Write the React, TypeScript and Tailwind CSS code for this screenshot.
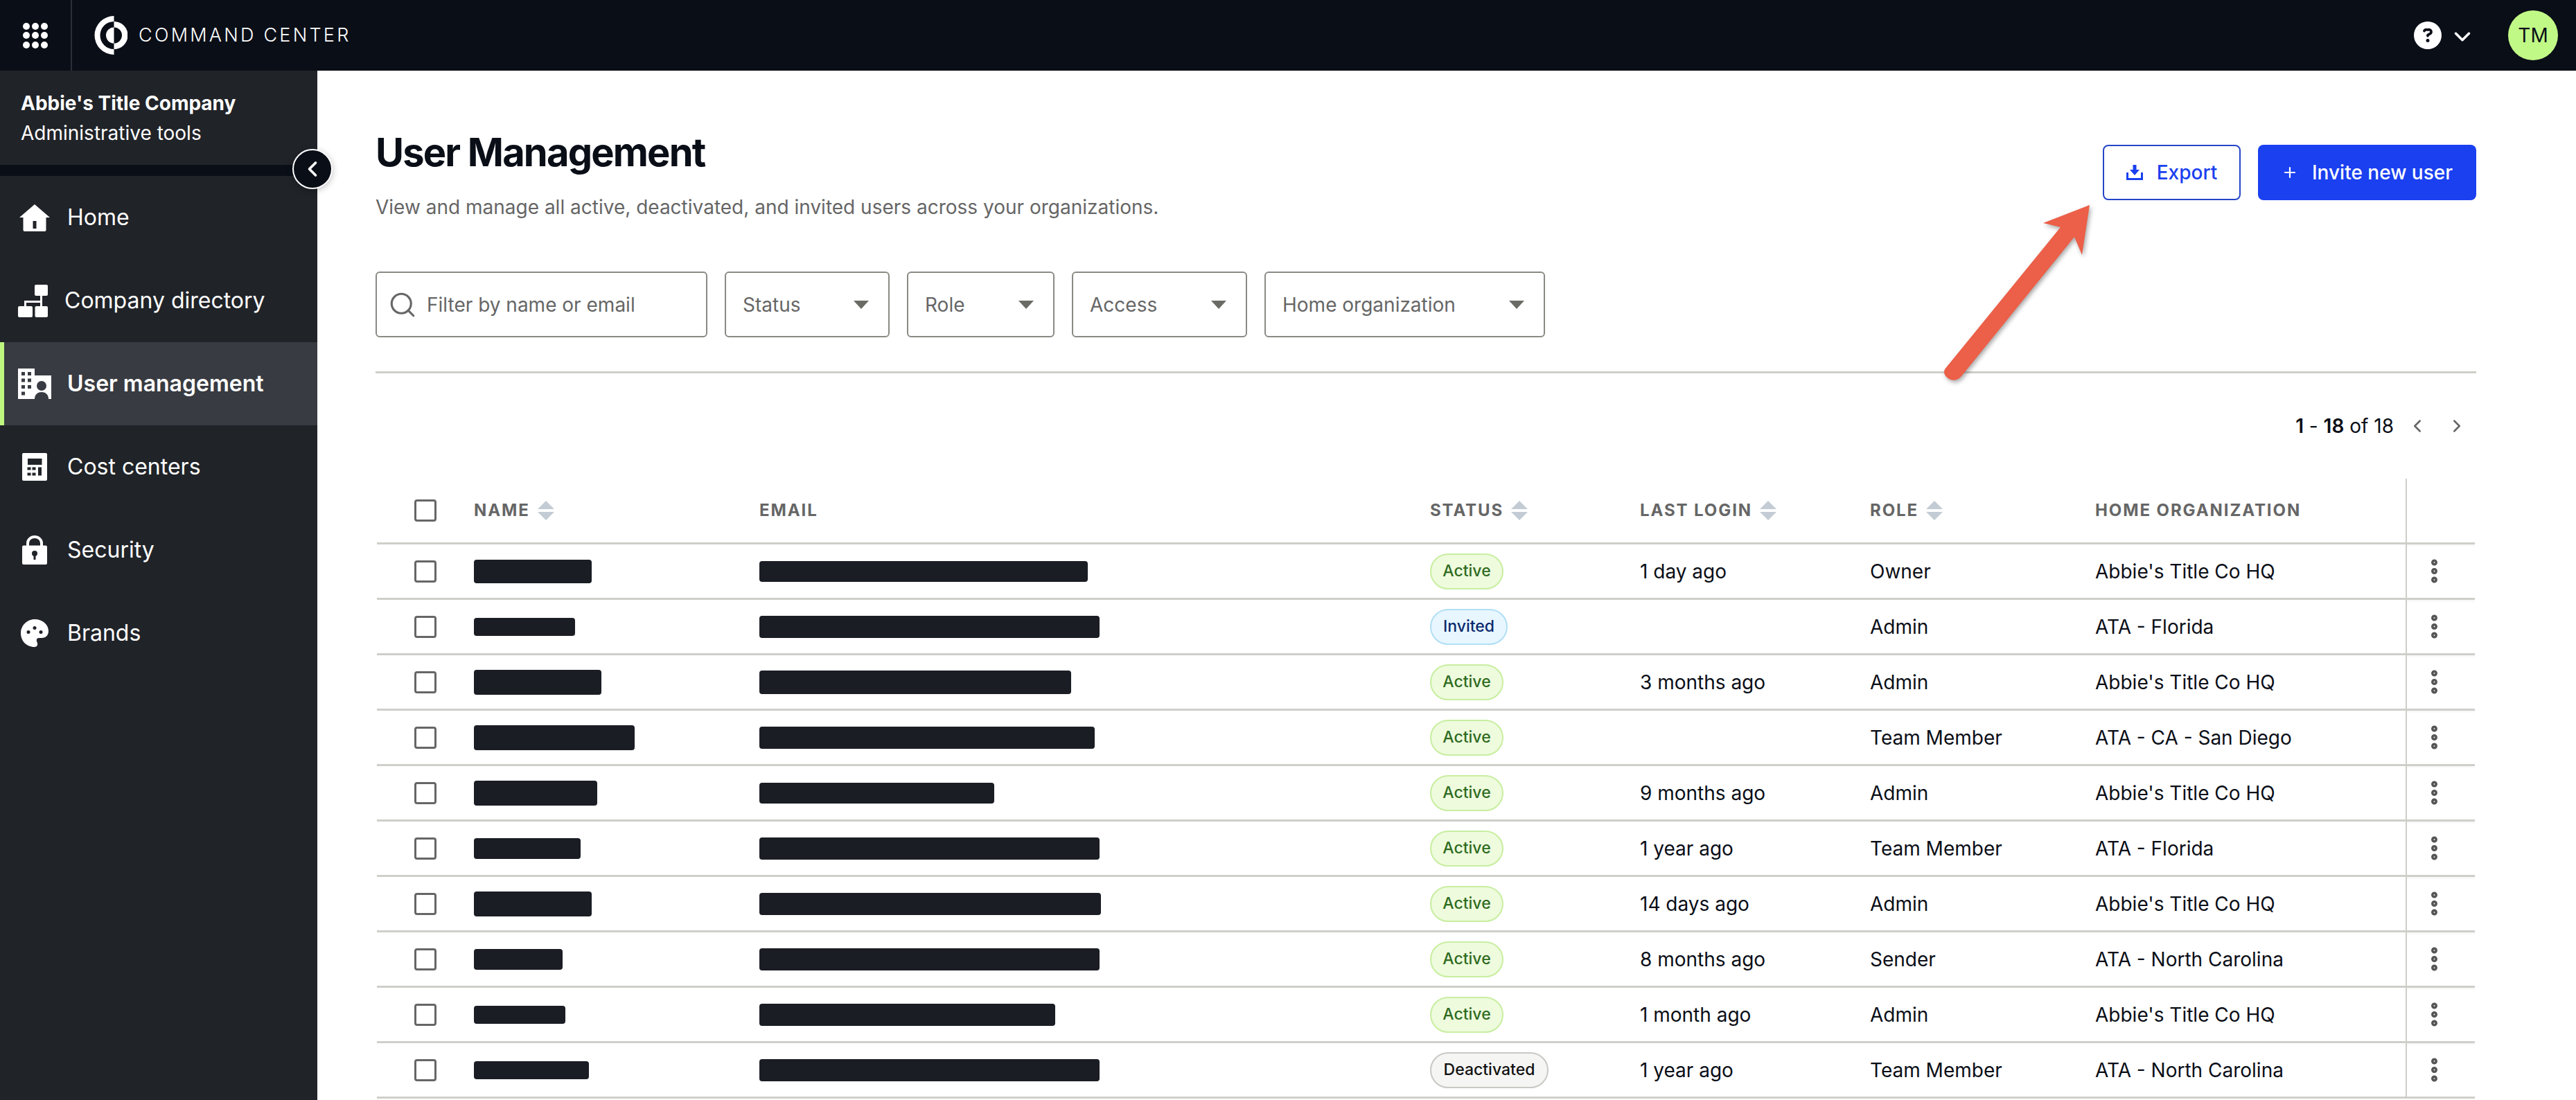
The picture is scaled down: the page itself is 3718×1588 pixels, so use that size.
import { ChevronDown, ChevronLeft, ChevronRight, EllipsisVertical, Plus, Search } from "lucide-react";
import { FaCircleQuestion } from "react-icons/fa6";

const users = [
  { name: 170, nameH: 34, email: 474, emailH: 30, status: "Active", login: "1 day ago", role: "Owner", org: "Abbie's Title Co HQ" },
  { name: 146, nameH: 26, email: 491, emailH: 32, status: "Invited", login: "", role: "Admin", org: "ATA - Florida" },
  { name: 184, nameH: 36, email: 450, emailH: 34, status: "Active", login: "3 months ago", role: "Admin", org: "Abbie's Title Co HQ" },
  { name: 232, nameH: 36, email: 484, emailH: 32, status: "Active", login: "", role: "Team Member", org: "ATA - CA - San Diego" },
  { name: 178, nameH: 36, email: 339, emailH: 30, status: "Active", login: "9 months ago", role: "Admin", org: "Abbie's Title Co HQ" },
  { name: 154, nameH: 30, email: 491, emailH: 32, status: "Active", login: "1 year ago", role: "Team Member", org: "ATA - Florida" },
  { name: 170, nameH: 36, email: 493, emailH: 32, status: "Active", login: "14 days ago", role: "Admin", org: "Abbie's Title Co HQ" },
  { name: 128, nameH: 30, email: 491, emailH: 32, status: "Active", login: "8 months ago", role: "Sender", org: "ATA - North Carolina" },
  { name: 132, nameH: 26, email: 427, emailH: 32, status: "Active", login: "1 month ago", role: "Admin", org: "Abbie's Title Co HQ" },
  { name: 166, nameH: 26, email: 491, emailH: 32, status: "Deactivated", login: "1 year ago", role: "Team Member", org: "ATA - North Carolina" },
];

const Logo = () => (
  <svg width="48" height="56" viewBox="0 0 48 56" fill="#fff">
    <path d="M28.5 0 A28 28 0 0 0 28.5 56 V48 A20 20 0 0 1 28.5 8 Z" />
    <path d="M28.5 16.5 A11.5 11.5 0 0 0 28.5 39.5 Z" />
    <path fillRule="evenodd" d="M28.5 8 A20 20 0 0 1 28.5 48 V39.5 A11.5 11.5 0 0 0 28.5 16.5 Z" />
  </svg>
);

const HomeIcon = () => (
  <svg width="44" height="39" viewBox="0 0 44 39" fill="#fff">
    <path d="M22 0 L44 19 H38.5 V37 Q38.5 39 36.5 39 H7.5 Q5.5 39 5.5 37 V19 H0 Z" />
    <rect x="19.5" y="24" width="5" height="11" fill="#202328" />
  </svg>
);

const SitemapIcon = () => (
  <svg width="43" height="47" viewBox="0 0 43 47" fill="#fff">
    <rect x="24" y="0" width="19" height="16" rx="2" />
    <rect x="32" y="14" width="3" height="18" />
    <rect x="9" y="23" width="26" height="3" />
    <rect x="9" y="23" width="3" height="9" />
    <rect x="0" y="31" width="21" height="16" rx="2" />
    <rect x="24.5" y="31" width="18.5" height="16" rx="2" />
  </svg>
);

const BuildingUserIcon = () => (
  <svg width="48" height="44" viewBox="0 0 48 44" fill="#fff">
    <path d="M0 0 H24 V10 H48 V44 H0 Z" />
    <g fill="#383b41">
      <rect x="5" y="5" width="5" height="5" />
      <rect x="14" y="5" width="5" height="5" />
      <rect x="5" y="14.5" width="5" height="5" />
      <rect x="14" y="14.5" width="5" height="5" />
      <rect x="5" y="24" width="5" height="5" />
      <rect x="14" y="24" width="5" height="5" />
      <rect x="5" y="33.5" width="5" height="5" />
      <circle cx="34" cy="25" r="7" />
      <path d="M24 44 C24 37 29 34 34 34 C39 34 44 37 44 44 Z" />
    </g>
  </svg>
);

const CalculatorIcon = () => (
  <svg width="36" height="40" viewBox="0 0 36 40" fill="#fff">
    <rect width="36" height="40" rx="2" />
    <g fill="#202328">
      <rect x="8" y="8" width="20.5" height="9" />
      <rect x="7.5" y="20.5" width="5" height="4" />
      <rect x="14.5" y="20.5" width="5" height="4" />
      <rect x="23" y="20.5" width="5" height="12" />
      <rect x="7.5" y="28.5" width="5" height="4" />
      <rect x="14.5" y="28.5" width="5" height="4" />
    </g>
  </svg>
);

const LockIcon = () => (
  <svg width="36" height="42" viewBox="0 0 36 42" fill="#fff">
    <path d="M8 15 V11 A10 9 0 0 1 28 11 V15" fill="none" stroke="#fff" strokeWidth="4" />
    <rect y="14.5" width="36" height="27.5" rx="2" />
    <circle cx="18" cy="26" r="4" fill="#202328" />
    <path d="M16.5 27 H19.5 V35 H16.5 Z" fill="#202328" />
  </svg>
);

const PaletteIcon = () => (
  <svg width="40" height="40" viewBox="0 0 40 40" fill="#fff">
    <path d="M20 0 C32 0 40 8 40 17 C40 24 35 27 30 27 L26 27 C23 27 22 30 23.5 33 C25 36 24 40 20 40 C8 40 0 31 0 20 C0 9 9 0 20 0 Z" />
    <g fill="#202328">
      <circle cx="11" cy="18.5" r="2.5" />
      <circle cx="20" cy="12.5" r="2.5" />
      <circle cx="29" cy="18.5" r="2.5" />
    </g>
  </svg>
);

const ExportIcon = () => (
  <svg width="24" height="22" viewBox="0 0 24 22" fill="#1a40f0">
    <path d="M9.5 0 H14.5 V7 H19 L12 15 L5 7 H9.5 Z" />
    <path d="M0 11 H3 V19 H21 V11 H24 V22 H0 Z" />
  </svg>
);

const SortIcon = () => (
  <svg width="24" height="28" viewBox="0 0 24 28" fill="#c3ccd4">
    <path d="M12 0 L24 12 H0 Z" />
    <path d="M0 16 H24 L12 28 Z" />
  </svg>
);

const FilterSelect = ({ label, width }: { label: string; width: string }) => (
  <div className={`flex h-[95px] items-center justify-between rounded-[6px] border-2 border-[#8a8a85] pl-[24px] pr-[28px] text-[28px] text-[#666] ${width}`}>
    <span>{label}</span>
    <svg width="22" height="12" viewBox="0 0 22 12" fill="#6b6b66">
      <path d="M0 0 H22 L11 12 Z" />
    </svg>
  </div>
);

const NavItem = ({ icon, label, active, gap, iconBox }: any) => (
  <div className={`flex h-[120px] items-center ${active ? "bg-[#383b41] font-semibold" : ""}`}>
    <div className={`h-full w-[6px] ${active ? "bg-[#bdf77f]" : ""}`} />
    <div className={`flex w-[88px] justify-center ${iconBox ?? ""}`}>{icon}</div>
    <span className={`text-[32px] text-white ${gap}`}>{label}</span>
  </div>
);

const StatusPill = ({ status }: { status: string }) => {
  const styles: any = {
    Active: "w-[106px] border-[#c8eea0] bg-[#eefbdd] text-[#2f6b1f]",
    Invited: "w-[112px] border-[#b0dff5] bg-[#e8f6ff] text-[#0a2a6c]",
    Deactivated: "w-[171px] border-[#c8c8c4] bg-[#f5f5f3] text-[#111]",
  };
  return (
    <span className={`flex h-[52px] items-center justify-center rounded-full border-2 text-[23px] font-medium ${styles[status]}`}>
      {status}
    </span>
  );
};

const HeaderLabel = ({ label, sort }: { label: string; sort?: boolean }) => (
  <div className="flex items-center gap-[11px]">
    <span className="text-[24px] font-bold tracking-[1.9px] text-[#666]">{label}</span>
    {sort && <SortIcon />}
  </div>
);

const tableCols = "grid grid-cols-[140px_412px_968px_303px_332px_325px_448px_100px] items-center";

export default function App() {
  return (
    <div className="relative flex h-[1588px] w-[3718px] flex-col overflow-hidden bg-white font-[Inter,sans-serif] text-[#0a0e17]">
      {/* Top bar */}
      <header className="flex h-[102px] shrink-0 items-center bg-[#0a0e17]">
        <div className="grid h-full w-[104px] grid-cols-[10px_10px_10px] content-center justify-center gap-x-[3px] gap-y-[3.5px] border-r-2 border-[#2a2f38]">
          {Array.from({ length: 9 }).map((_, i) => (
            <span key={i} className="h-[10px] w-[10px] rounded-full bg-white" />
          ))}
        </div>
        <div className="ml-[32px]"><Logo /></div>
        <span className="ml-[16px] text-[27px] font-light tracking-[3.25px] text-white">COMMAND CENTER</span>
        <div className="ml-auto flex items-center">
          <FaCircleQuestion size={40} className="text-white" />
          <ChevronDown size={38} strokeWidth={2.2} className="ml-[11px] mt-[4px] text-white" />
          <div className="ml-[47px] mr-[26px] flex h-[72px] w-[72px] items-center justify-center rounded-full bg-[#c1f986] text-[28px] text-[#0a0e17]">TM</div>
        </div>
      </header>

      <div className="flex min-h-0 flex-1">
        {/* Sidebar */}
        <aside className="relative w-[458px] shrink-0 bg-[#202328]">
          <div className="flex h-[136px] flex-col pl-[30px] pt-[27px] text-white">
            <span className="text-[28px] font-bold leading-[40px]">Abbie's Title Company</span>
            <span className="mt-[3px] text-[28px] leading-[40px]">Administrative tools</span>
          </div>
          <div className="h-[16px] bg-[#0a0e17]" />
          <button className="absolute left-[422px] top-[113px] z-10 flex h-[58px] w-[58px] items-center justify-center rounded-full border-2 border-white bg-[#0a0e17] shadow-[0_2px_10px_rgba(0,0,0,0.25)]">
            <ChevronLeft size={36} strokeWidth={2.4} className="text-white" />
          </button>
          <nav>
            <NavItem icon={<HomeIcon />} label="Home" gap="ml-[3px]" />
            <NavItem icon={<SitemapIcon />} label="Company directory" iconBox="pr-[5px]" gap="ml-[-1px]" />
            <NavItem icon={<BuildingUserIcon />} label="User management" gap="ml-[3px]" active />
            <NavItem icon={<CalculatorIcon />} label="Cost centers" gap="ml-[3px]" />
            <NavItem icon={<LockIcon />} label="Security" gap="ml-[3px]" />
            <NavItem icon={<PaletteIcon />} label="Brands" gap="ml-[3px]" />
          </nav>
        </aside>

        {/* Main */}
        <main className="min-w-0 flex-1 pl-[84px] pr-[144px] pt-[82px]">
          <div className="flex items-start justify-between">
            <div>
              <h1 className="text-[56px] font-bold leading-[72px] tracking-[-1.8px]">User Management</h1>
              <p className="mt-[23px] text-[28px] leading-[40px] text-[#666]">View and manage all active, deactivated, and invited users across your organizations.</p>
            </div>
            <div className="mt-[25px] flex gap-[25px]">
              <button className="flex h-[80px] w-[199px] items-center justify-center gap-[20px] rounded-[8px] border-2 border-[#2545c8] text-[28px] font-medium text-[#1a40f0]">
                <ExportIcon />
                Export
              </button>
              <button className="flex h-[80px] w-[315px] items-center justify-center gap-[20px] rounded-[8px] bg-[#1a40f0] text-[28px] font-medium text-white">
                <Plus size={24} strokeWidth={2.2} />
                Invite new user
              </button>
            </div>
          </div>

          <div className="mt-[73px] flex gap-[25px]">
            <div className="flex h-[95px] w-[479px] items-center gap-[14px] rounded-[6px] border-2 border-[#8a8a85] pl-[16px] text-[28px] text-[#666]">
              <Search size={42} strokeWidth={1.8} className="text-[#666]" />
              <span>Filter by name or email</span>
            </div>
            <FilterSelect label="Status" width="w-[238px]" />
            <FilterSelect label="Role" width="w-[213px]" />
            <FilterSelect label="Access" width="w-[253px]" />
            <FilterSelect label="Home organization" width="w-[405px]" />
          </div>

          <div className="mt-[49px] h-[3px] bg-[#cfcfca]" />

          <div className="flex h-[152px] items-center justify-end text-[28px]">
            <span>
              <b className="font-semibold">1</b> - <b className="font-semibold">18</b> of 18
            </span>
            <ChevronLeft size={30} strokeWidth={2} className="ml-[19px] text-[#666]" />
            <ChevronRight size={30} strokeWidth={2} className="ml-[27px] mr-[13px] text-[#666]" />
          </div>

          {/* Table */}
          <div className="ml-[2px] w-[3028px]">
            <div className={`${tableCols} h-[95px] border-b-[3px] border-[#cfcfca]`}>
              <span className="ml-[54px] h-[32px] w-[32px] rounded-[4px] border-[3px] border-[#666]" />
              <HeaderLabel label="NAME" sort />
              <HeaderLabel label="EMAIL" />
              <HeaderLabel label="STATUS" sort />
              <HeaderLabel label="LAST LOGIN" sort />
              <HeaderLabel label="ROLE" sort />
              <HeaderLabel label="HOME ORGANIZATION" />
              <div className="h-full border-l-2 border-[#cfcfca]" />
            </div>
            {users.map((u, i) => (
              <div key={i} className={`${tableCols} h-[80px] border-b-[3px] border-[#cfcfca] text-[28px]`}>
                <span className="ml-[54px] h-[32px] w-[32px] rounded-[4px] border-[3px] border-[#666]" />
                <div className="rounded-[4px] bg-[#1a1d24]" style={{ width: u.name, height: u.nameH }} />
                <div className="rounded-[4px] bg-[#1a1d24]" style={{ width: u.email, height: u.emailH }} />
                <div className="flex"><StatusPill status={u.status} /></div>
                <span>{u.login}</span>
                <span>{u.role}</span>
                <span>{u.org}</span>
                <div className="flex h-full items-center justify-center border-l-2 border-[#cfcfca] shadow-[inset_0_4px_4px_-3px_rgba(0,0,0,0.06)]">
                  <EllipsisVertical size={43} strokeWidth={3} className="ml-[-20px] text-[#555]" />
                </div>
              </div>
            ))}
          </div>
        </main>
      </div>

      {/* Annotation arrow pointing at Export */}
      <svg className="absolute left-[2790px] top-[280px] drop-shadow-[2px_3px_3px_rgba(0,0,0,0.35)]" width="240" height="290" viewBox="0 0 240 290" fill="#ec5f48">
        <path d="M226 16 L215 88 L204 62 L41 263 Q34 271 25 268 Q13 262 17 253 L184 48 L159 42 Z" />
      </svg>
    </div>
  );
}
